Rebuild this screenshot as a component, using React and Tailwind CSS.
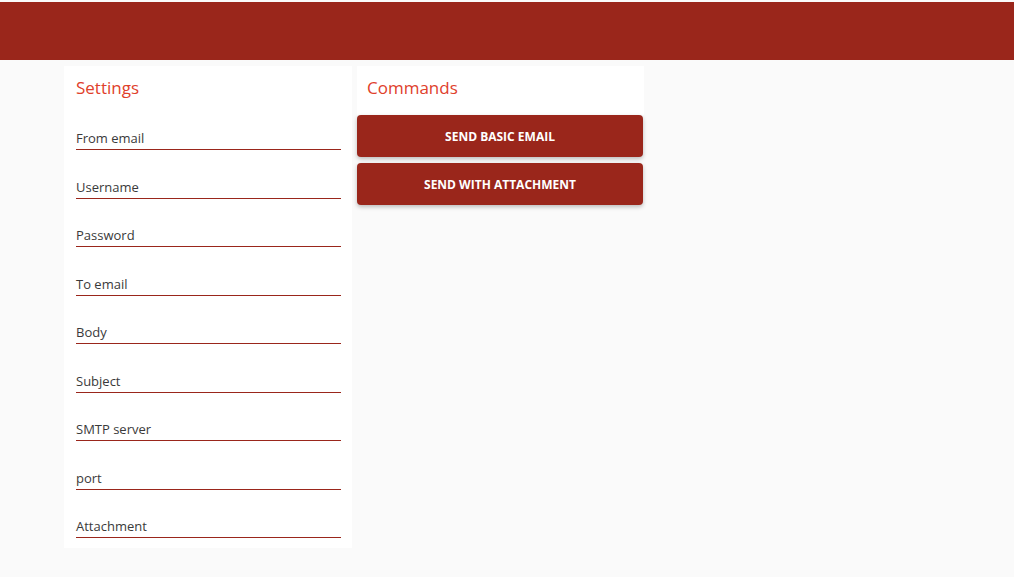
const fields = [
  'From email',
  'Username',
  'Password',
  'To email',
  'Body',
  'Subject',
  'SMTP server',
  'port',
  'Attachment',
]

export default function App() {
  return (
    <div className="min-h-screen bg-[#fafafa] pt-[2px]" style={{ fontFamily: '"Open Sans", "Noto Sans", sans-serif' }}>
      <header className="h-[58px] bg-[#9a261b]" />

      <main className="flex items-start gap-[5px] pl-[64px] pt-[6px]">
        {/* Settings */}
        <section className="w-[288px] bg-white pl-3 pr-[11px] pt-[10px] pb-[10px]">
          <h2 className="text-[17px] leading-6 text-[#e0402b]">Settings</h2>
          <div className="mt-[31px] flex flex-col gap-[29.5px]">
            {fields.map((f) => (
              <label key={f} className="block border-b border-[#9a261b] pb-[4px] text-[13px] leading-[14px] text-[#3a3a3a]">
                {f}
              </label>
            ))}
          </div>
        </section>

        {/* Commands */}
        <section className="w-[287px]">
          <div className="h-[49px] bg-white pl-[10px] pt-[10px]">
            <h2 className="text-[17px] leading-6 text-[#e0402b]">Commands</h2>
          </div>
          <div className="flex w-[286px] flex-col gap-[6px]">
            <button className="h-[42px] rounded-sm bg-[#9a261b] pt-[2px] text-[12px] font-bold text-white shadow-[0_2px_4px_rgba(0,0,0,0.25)]">
              SEND BASIC EMAIL
            </button>
            <button className="h-[42px] rounded-sm bg-[#9a261b] pt-[2px] text-[12px] font-bold text-white shadow-[0_2px_4px_rgba(0,0,0,0.25)]">
              SEND WITH ATTACHMENT
            </button>
          </div>
        </section>
      </main>
    </div>
  )
}
